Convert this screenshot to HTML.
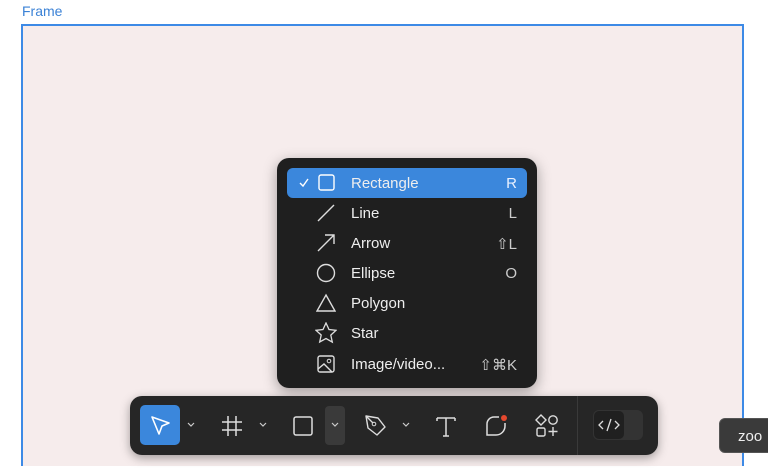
<!DOCTYPE html>
<html style="overflow:hidden;height:468px"><head><style>
body{margin:0;width:768px;height:468px;overflow:hidden;background:#fff;font-family:"Liberation Sans",sans-serif;position:relative}
.lbl{position:absolute;left:22px;top:3px;font-size:14px;color:#3b82d6}
.frame{position:absolute;left:21px;top:24px;width:719px;height:440px;border:2px solid #3d8ae6;border-bottom:none;background:#f6ecec}
.menu{position:absolute;left:277px;top:158px;width:260px;height:230px;background:#1f1f1f;border-radius:12px;box-shadow:0 4px 14px rgba(0,0,0,.35);color:#eee;font-size:15px}
.row{position:absolute;left:10px;width:240px;height:30px}
.row.sel{background:#3b87dc;border-radius:6px}
.row .t{position:absolute;left:64px;top:7px}
.row .k{position:absolute;right:10px;top:7px;color:#ccc}
.row.sel .k{color:#e8f0ff}
.row svg{position:absolute;left:29px;top:5px}
.tb{position:absolute;left:130px;top:396px;width:528px;height:59px;background:#262626;border-radius:12px;box-shadow:0 3px 10px rgba(0,0,0,.35)}
.tb svg{position:absolute}
.tip{position:absolute;left:719px;top:418px;width:60px;height:35px;background:#3a3a3a;border:1px solid #555;border-radius:6px;color:#eee;font-size:15px;box-sizing:border-box;padding:9px 0 0 18px}
</style></head><body>
<div class="lbl">Frame</div>
<div class="frame"></div>
<div class="menu">
 <div class="row sel" style="top:10px"><svg width="40" height="20" viewBox="0 0 40 20" style="left:10px"><path d="M3 10l3 3 5-7" stroke="#fff" stroke-width="1.4" fill="none"/><rect x="22" y="2" width="15" height="15" rx="2" stroke="#fff" stroke-width="1.4" fill="none"/></svg><span class="t">Rectangle</span><span class="k">R</span></div>
 <div class="row" style="top:40px"><svg width="20" height="20"><path d="M2 18L18 2" stroke="#ddd" stroke-width="1.4"/></svg><span class="t">Line</span><span class="k">L</span></div>
 <div class="row" style="top:70px"><svg width="20" height="20"><path d="M2 18L18 2M9 2h9v9" stroke="#ddd" stroke-width="1.4" fill="none"/></svg><span class="t">Arrow</span><span class="k">⇧L</span></div>
 <div class="row" style="top:100px"><svg width="20" height="20"><circle cx="10" cy="10" r="8.5" stroke="#ddd" stroke-width="1.4" fill="none"/></svg><span class="t">Ellipse</span><span class="k">O</span></div>
 <div class="row" style="top:130px"><svg width="20" height="20"><path d="M10 2L19 18H1Z" stroke="#ddd" stroke-width="1.4" fill="none"/></svg><span class="t">Polygon</span></div>
 <div class="row" style="top:160px"><svg width="22" height="22" style="left:28px;top:4px"><path d="M11 1l3 6.5 7 .8-5.2 4.8 1.5 7L11 16.5 4.7 20l1.5-7L1 8.3l7-.8z" stroke="#ddd" stroke-width="1.3" fill="none"/></svg><span class="t">Star</span></div>
 <div class="row" style="top:191px"><svg width="20" height="20"><rect x="2" y="2" width="16" height="16" rx="2" stroke="#ddd" stroke-width="1.4" fill="none"/><circle cx="13" cy="7" r="1.8" stroke="#ddd" fill="none"/><path d="M2 15l6-5 8 8" stroke="#ddd" stroke-width="1.4" fill="none"/></svg><span class="t">Image/video...</span><span class="k">⇧⌘K</span></div>
</div>
<div class="tb">
 <div style="position:absolute;left:10px;top:9px;width:40px;height:40px;background:#3b87dc;border-radius:5px"></div>
 <svg style="left:19px;top:18px" width="24" height="24"><path d="M3 3l17 6-7 3-3 8z" stroke="#fff" stroke-width="1.6" fill="none" stroke-linejoin="round"/></svg>
 <svg style="left:57px;top:26px" width="8" height="6"><path d="M1 1l3 3 3-3" stroke="#ccc" fill="none" stroke-width="1.2"/></svg>
 <svg style="left:91px;top:19px" width="22" height="22"><path d="M7 1v20M15 1v20M1 7h20M1 15h20" stroke="#ddd" stroke-width="1.5"/></svg>
 <svg style="left:129px;top:26px" width="8" height="6"><path d="M1 1l3 3 3-3" stroke="#ccc" fill="none" stroke-width="1.2"/></svg>
 <svg style="left:162px;top:19px" width="22" height="22"><rect x="2" y="2" width="18" height="18" rx="2" stroke="#ddd" stroke-width="1.5" fill="none"/></svg>
 <div style="position:absolute;left:195px;top:10px;width:20px;height:39px;background:#3a3a3a;border-radius:4px"></div>
 <svg style="left:201px;top:26px" width="8" height="6"><path d="M1 1l3 3 3-3" stroke="#ccc" fill="none" stroke-width="1.2"/></svg>
 <svg style="left:233px;top:17px" width="26" height="26"><path d="M3 3l12 2 7 9-8 8-9-7zM3 3l7 7" stroke="#ddd" stroke-width="1.4" fill="none" stroke-linejoin="round"/><circle cx="11" cy="11" r="1.8" stroke="#ddd" fill="none"/></svg>
 <svg style="left:272px;top:26px" width="8" height="6"><path d="M1 1l3 3 3-3" stroke="#ccc" fill="none" stroke-width="1.2"/></svg>
 <svg style="left:305px;top:19px" width="22" height="22"><path d="M2 3h18M11 3v18M2 3v3M20 3v3M8 21h6" stroke="#ddd" stroke-width="1.5" fill="none"/></svg>
 <svg style="left:355px;top:18px" width="24" height="24"><path d="M14 3H9a7 7 0 0 0-7 7v11h9a9 9 0 0 0 9-9V9" stroke="#ddd" stroke-width="1.5" fill="none"/><circle cx="19" cy="4" r="3" fill="#e5482e"/></svg>
 <svg style="left:405px;top:18px" width="24" height="24"><path d="M6 1l5 5-5 5-5-5z" stroke="#ddd" stroke-width="1.4" fill="none"/><circle cx="18" cy="6" r="4.2" stroke="#ddd" stroke-width="1.4" fill="none"/><rect x="2" y="14" width="8" height="8" rx="1.5" stroke="#ddd" stroke-width="1.4" fill="none"/><path d="M18 13v9M13.5 17.5h9" stroke="#ddd" stroke-width="1.4"/></svg>
 <div style="position:absolute;left:447px;top:0;width:1px;height:59px;background:#3a3a3a"></div>
 <div style="position:absolute;left:463px;top:14px;width:50px;height:30px;background:#333;border-radius:6px"></div>
 <div style="position:absolute;left:464px;top:15px;width:30px;height:28px;background:#202020;border-radius:5px"></div>
 <svg style="left:468px;top:22px" width="22" height="14"><path d="M5 3L1 7l4 4M17 3l4 4-4 4M13 1L9 13" stroke="#ddd" stroke-width="1.3" fill="none"/></svg>
</div>
<div class="tip">zoo</div>
</body></html>
